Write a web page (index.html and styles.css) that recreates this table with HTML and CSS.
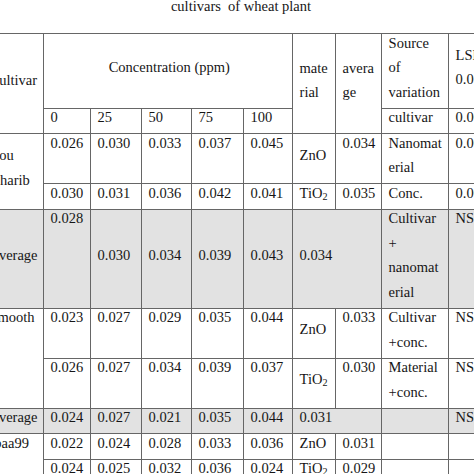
FILE: index.html
```html
<!DOCTYPE html>
<html>
<head>
<meta charset="utf-8">
<link rel="stylesheet" href="styles.css">
</head>
<body>
<p class="title">cultivars  of wheat plant</p>
<table class="data">
  <colgroup>
    <col class="w-cult"><col class="w-c0"><col class="w-c25"><col class="w-c50"><col class="w-c75"><col class="w-c100"><col class="w-mat"><col class="w-avg"><col class="w-src"><col class="w-lsd">
  </colgroup>
  <tr>
    <td rowspan="2" class="name m">Cultivar</td>
    <td colspan="5" class="m ctr">Concentration (ppm)</td>
    <td rowspan="2" class="m">material</td>
    <td rowspan="2" class="m">average</td>
    <td>Source of variation</td>
    <td class="m">LSD 0.05</td>
  </tr>
  <tr>
    <td>0</td><td>25</td><td>50</td><td>75</td><td>100</td>
    <td>cultivar</td><td>0.004</td>
  </tr>
  <tr>
    <td rowspan="2" class="name m"><span class="hang">Abou</span> Gharib</td>
    <td>0.026</td><td>0.030</td><td>0.033</td><td>0.037</td><td>0.045</td>
    <td class="m">ZnO</td><td>0.034</td><td>Nanomaterial</td><td>0.006</td>
  </tr>
  <tr>
    <td>0.030</td><td>0.031</td><td>0.036</td><td>0.042</td><td>0.041</td>
    <td>TiO<sub>2</sub></td><td>0.035</td><td>Conc.</td><td>0.005</td>
  </tr>
  <tr class="avg">
    <td class="name m">Average</td>
    <td>0.028</td><td class="m">0.030</td><td class="m">0.034</td><td class="m">0.039</td><td class="m">0.043</td>
    <td colspan="2" class="m">0.034</td><td>Cultivar + nanomaterial</td><td>NS</td>
  </tr>
  <tr>
    <td rowspan="2" class="name">Smooth</td>
    <td>0.023</td><td>0.027</td><td>0.029</td><td>0.035</td><td>0.044</td>
    <td class="m">ZnO</td><td>0.033</td><td>Cultivar +conc.</td><td>NS</td>
  </tr>
  <tr>
    <td>0.026</td><td>0.027</td><td>0.034</td><td>0.039</td><td>0.037</td>
    <td class="m">TiO<sub>2</sub></td><td>0.030</td><td>Material +conc.</td><td>NS</td>
  </tr>
  <tr class="avg">
    <td class="name">Average</td>
    <td>0.024</td><td>0.027</td><td>0.021</td><td>0.035</td><td>0.044</td>
    <td colspan="2">0.031</td><td></td><td>NS</td>
  </tr>
  <tr>
    <td rowspan="2" class="name">Ibaa99</td>
    <td>0.022</td><td>0.024</td><td>0.028</td><td>0.033</td><td>0.036</td>
    <td>ZnO</td><td>0.031</td><td></td><td></td>
  </tr>
  <tr>
    <td>0.024</td><td>0.025</td><td>0.032</td><td>0.036</td><td>0.024</td>
    <td>TiO<sub>2</sub></td><td>0.029</td><td></td><td></td>
  </tr>
</table>
</body>
</html>
```
FILE: styles.css
```css
html, body {
  margin: 0;
  padding: 0;
  overflow: hidden;
  background: #ffffff;
}

body {
  width: 474px;
  height: 474px;
  font-family: "Liberation Serif", "Times New Roman", serif;
  color: #161616;
}

.title {
  margin: 0 0 20px;
  padding-left: 8px;
  font-size: 14.5px;
  line-height: 13px;
  text-align: center;
  white-space: pre;
}

.data {
  border-collapse: collapse;
  table-layout: fixed;
  width: 522px;
  margin-left: -14px;
  font-size: 14.5px;
  line-height: 24.5px;
}

.data td {
  border: 1px solid #666666;
  padding: 0 4px 3.5px 6.5px;
  vertical-align: top;
  text-align: left;
  overflow-wrap: anywhere;
}

/* lift the glyphs a little inside each line, as in the source table */
.data td::before {
  content: "";
  display: block;
  margin-top: -3.5px;
}

.data td.m {
  vertical-align: middle;
}

.data td.ctr {
  text-align: center;
}

.data td.name {
  padding-left: 2.5px;
}

.hang {
  margin-left: -8px;
}

.avg td {
  background: #e2e2e2;
}

sub {
  font-size: 0.7em;
  line-height: 0;
  vertical-align: -0.2em;
}

.w-cult { width: 57px; }
.w-c0 { width: 47px; }
.w-c25 { width: 51px; }
.w-c50 { width: 50px; }
.w-c75 { width: 52px; }
.w-c100 { width: 49px; }
.w-mat { width: 43px; }
.w-avg { width: 46px; }
.w-src { width: 67px; }
.w-lsd { width: 60px; }
```
